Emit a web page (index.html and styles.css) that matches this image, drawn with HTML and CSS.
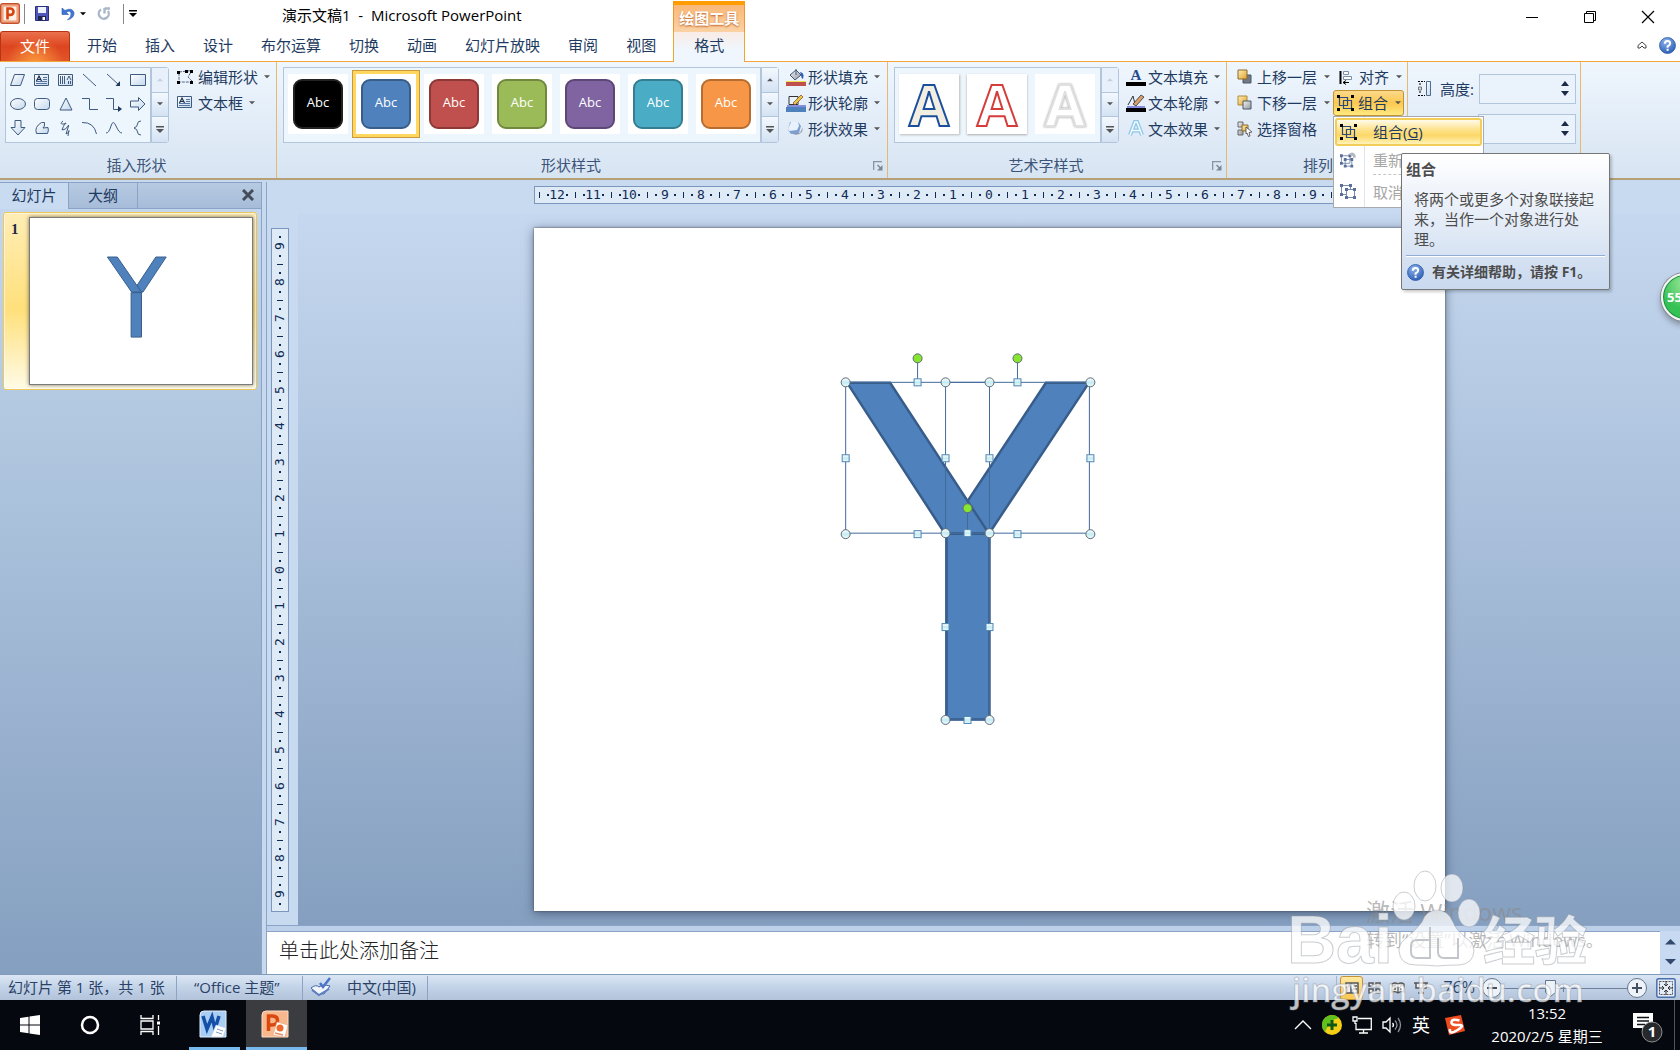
FILE: index.html
```html
<!DOCTYPE html>
<html lang="zh-CN">
<head>
<meta charset="utf-8">
<title>演示文稿1 - Microsoft PowerPoint</title>
<link rel="stylesheet" href="styles.css">
</head>
<body>
<svg class="defs" aria-hidden="true">
  <defs>
    <linearGradient id="sheet" x1="0" y1="0" x2="1" y2="1"><stop offset="0" stop-color="#fff"/><stop offset="1" stop-color="#c3d8ec"/></linearGradient>
    <linearGradient id="gold" x1="0" y1="0" x2="1" y2="1"><stop offset="0" stop-color="#fff0b8"/><stop offset="1" stop-color="#dfa02c"/></linearGradient>
    <linearGradient id="silver" x1="0" y1="0" x2="1" y2="1"><stop offset="0" stop-color="#f4f4f4"/><stop offset="1" stop-color="#8f979f"/></linearGradient>
    <radialGradient id="blueball" cx=".4" cy=".25" r=".8"><stop offset="0" stop-color="#8db4ea"/><stop offset="1" stop-color="#2a5cb4"/></radialGradient>
    <linearGradient id="knob" x1="0" y1="0" x2="0" y2="1"><stop offset="0" stop-color="#fff"/><stop offset=".5" stop-color="#c4ebf2"/><stop offset="1" stop-color="#effcff"/></linearGradient>
    <symbol id="i-down" viewBox="0 0 8 5"><path d="M0 0h8L4 4z" fill="currentColor"/></symbol>
    <symbol id="i-up" viewBox="0 0 8 5"><path d="M0 4h8L4 0z" fill="currentColor"/></symbol>
    <symbol id="i-more" viewBox="0 0 8 8"><path d="M0 0h8v1.5H0zM0 3h8L4 7z" fill="currentColor"/></symbol>
    <symbol id="i-launch" viewBox="0 0 10 10"><path d="M.5 9V.5H9" fill="none" stroke="#8a94a0" stroke-width="1.6"/><path d="M9.5 4v5.500H4L6.500 7 4 4.500 5 3.500l2.500 2.500z" fill="#7d8794"/></symbol>
    <symbol id="i-help" viewBox="0 0 16 16"><circle cx="8" cy="8" r="7.500" fill="url(#blueball)" stroke="#2f5ea8" stroke-width=".8"/><path d="M5.500 6.300Q5.500 3.800 8 3.800t2.500 2.200Q10.500 7.400 8.100 8.800V10M8.100 11v2" fill="none" stroke="#fff" stroke-width="1.900"/></symbol>
    <symbol id="i-group" viewBox="0 0 17 16"><path d="M2.500 2.500h8v8h-8zM6.500 5.500h8v8h-8z" fill="none" stroke="#2c4a7a" stroke-width="1.200"/><path d="M0 0h3v3H0zM14 0h3v3h-3zM0 13h3v3H0zM14 13h3v3h-3z" fill="#000"/></symbol>
    <symbol id="i-regroup" viewBox="0 0 18 18"><path d="M1.500 4.500h9v8h-9zM5.500 8.500h7v7h-7z" fill="none" stroke="#7a8fb0"/><path d="M0 3h3v3H0zM9 3h3v3H9zM0 11h3v3H0zM4 7h3v3H4zM11 7h3v3h-3zM4 14h3v3H4zM11 14h3v3h-3z" fill="#5a6f99"/><path d="M9 3q4-4 7 0l1 3-3 1q0-3-3-3z" fill="#b5b9bf"/></symbol>
    <symbol id="i-ungroup" viewBox="0 0 17 16"><path d="M1.500 1.500h9v9h-9z" fill="none" stroke="#7a8fb0"/><path d="M6.500 5.500h8v8h-8z" fill="#fff" stroke="#7a8fb0"/><path d="M0 0h3v3H0zM9 0h3v3H9zM0 9h3v3H0zM5 4h3v3H5zM13 4h3v3h-3zM5 12h3v3H5zM13 12h3v3h-3z" fill="#5a6f99"/></symbol>
    <symbol id="i-textbox" viewBox="0 0 16 14"><path d="M.5 1.500h14v11H.5z" fill="url(#sheet)" stroke="#3f5b7d"/><path d="M2.500 8 5 3l2.500 5M3.500 6.500h3" fill="none" stroke="#1d2f4d" stroke-width="1.200"/><path d="M9 4.500h4M9 6.500h4M2 8.500h11M2 10.500h11" stroke="#5675a0"/></symbol>
  </defs>
</svg>

<header class="titlebar">
  <div class="quick">
    <svg width="20" height="21" viewBox="0 0 20 21"><rect x=".7" y=".7" width="18.600" height="19.600" rx="2" fill="#f6b392" stroke="#c5502a" stroke-width="1.400"/><rect x="3" y="3" width="14" height="15" fill="#fff1e8" stroke="#e9936c"/><path d="M7.500 16.500V5.500h2.800a3.200 3.200 0 0 1 0 6.400H7.500" fill="none" stroke="#d8420e" stroke-width="2.600"/></svg>
    <i class="bar"></i>
    <svg class="save" width="14" height="15" viewBox="0 0 14 15"><path d="M.5.5h13v14H.5z" fill="#4f56b8" stroke="#2c2f80"/><path d="M3 1h8v6H3z" fill="#eef2fb"/><path d="M3 10h8v4.500H3z" fill="#1f2350"/><path d="M7.500 11h2.500v3H7.500z" fill="#fff"/></svg>
    <svg class="undo" width="14" height="14" viewBox="0 0 14 14"><path d="M1 1v6.500h6.500L5.300 5.400Q9 2.800 10 6t-3.500 7Q13.500 11 13 5.500 11 0 4 3.500z" fill="#3c76d6" stroke="#2b57ad" stroke-width=".6"/></svg>
    <svg class="arr" width="6" height="4"><use href="#i-down"/></svg>
    <svg class="redo" width="14" height="14" viewBox="0 0 14 14"><path d="M4 2.500A5 5 0 1 0 11 4M7.500 1v5.500M7.500 1.500H13" fill="none" stroke="#a9b7c9" stroke-width="2.400"/></svg>
    <i class="bar"></i>
    <svg class="arr" width="8" height="8"><use href="#i-more"/></svg>
  </div>
  <h1>演示文稿1&nbsp; -&nbsp; Microsoft PowerPoint</h1>
  <div class="wincontrols">
    <button aria-label="最小化"><svg width="14" height="14"><path d="M1 7.500h12" stroke="#000"/></svg></button>
    <button aria-label="还原"><svg width="14" height="14" fill="none" stroke="#000"><path d="M1.500 3.500h9v9h-9zM3.500 3V1.500h9v9H11"/></svg></button>
    <button aria-label="关闭"><svg width="14" height="14"><path d="M1 1l12 12M13 1 1 13" stroke="#000" stroke-width="1.200"/></svg></button>
  </div>
</header>

<nav class="tabs">
  <button class="file">文件</button>
  <button>开始</button><button>插入</button><button>设计</button><button>布尔运算</button><button>切换</button><button>动画</button><button>幻灯片放映</button><button>审阅</button><button>视图</button>
  <div class="context"><span class="context-title">绘图工具</span><button>格式</button></div>
  <div class="tabs-end">
    <svg width="10" height="8" viewBox="0 0 10 8"><path d="M1 4.500 5 1l4 3.500V7H7L5 5 3 7H1z" fill="#fff" stroke="#444"/></svg>
    <svg width="17" height="17"><use href="#i-help"/></svg>
  </div>
</nav>

<section class="ribbon">
  <div class="group g-insert">
    <div class="content">
      <div class="gallery">
        <div class="shapes">
          <svg viewBox="0 0 16 16"><path d="M4.500 2.500h10l-4 11h-10z"/></svg>
          <svg viewBox="0 0 16 16"><use href="#i-textbox" y="1" width="16" height="14"/></svg>
          <svg viewBox="0 0 16 16"><path d="M.5 2.500h14v11H.5z"/><path d="M2.500 4v8M4.500 4v8M6.500 4v8M10.500 9v3M12.500 9v3M9 8l2-4 2 4"/></svg>
          <svg viewBox="0 0 16 16"><path d="m1 2 13 12"/></svg>
          <svg viewBox="0 0 16 16"><path d="m1 2 12 11"/><path class="solid" d="M14 14H9.500L14 9z"/></svg>
          <svg viewBox="0 0 16 16"><path d="M.5 2.500h15v11H.5z"/></svg>
          <svg viewBox="0 0 16 16"><ellipse cx="8" cy="8" rx="7.500" ry="5.500"/></svg>
          <svg viewBox="0 0 16 16"><rect x=".5" y="2.500" width="15" height="11" rx="3"/></svg>
          <svg viewBox="0 0 16 16"><path d="m8 2 6 12H2z"/></svg>
          <svg viewBox="0 0 16 16"><path fill="none" d="M0 2.500h7.500v11H16"/></svg>
          <svg viewBox="0 0 16 16"><path fill="none" d="M0 2.500h7.500v11H15"/><path class="solid" d="M12 10v6l4-3z"/></svg>
          <svg viewBox="0 0 16 16"><path d="M.5 5h8V1.500L15 8l-6.500 6.500V11h-8z"/></svg>
          <svg viewBox="0 0 16 16"><path d="M5 .5h6v7h4L8 15 1 7.500h4z"/></svg>
          <svg viewBox="0 0 16 16"><path d="M2.500 13.500Q0 7 7.500 2.500h3Q11 7 9 8l5-.5q1 3-.5 6z"/></svg>
          <svg viewBox="0 0 16 16"><path fill="none" d="M5 1q-4 3 0 3t3-1-4 7q4 0 6-4t-2 8q3-1 3-3t-1 5"/></svg>
          <svg viewBox="0 0 16 16"><path fill="none" d="M0 2.500Q12 2 14.500 14"/></svg>
          <svg viewBox="0 0 16 16"><path fill="none" d="M0 13Q3 13 5 6t5 0 6 7"/></svg>
          <svg viewBox="0 0 16 16"><path fill="none" d="M11 1Q7.500 1 7.500 4T4 8q3.500 1 3.500 4t3.500 3"/></svg>
        </div>
        <div class="scroller"><button disabled aria-label="上一行"><svg width="6" height="4"><use href="#i-up"/></svg></button><button aria-label="下一行"><svg width="6" height="4"><use href="#i-down"/></svg></button><button aria-label="其他"><svg width="8" height="8"><use href="#i-more"/></svg></button></div>
      </div>
      <div class="commands">
        <button><svg width="20" height="16" viewBox="0 0 20 16"><path d="M3 3 16 1.500 12 8l5 5H3z" fill="none" stroke="#4c6488" stroke-dasharray="3 1"/><path d="M1 2h3v3H1zM9 1h3v3H9zM14 1h3v3h-3zM14 12h3v3h-3zM1 12h3v3H1z" fill="#000"/></svg>编辑形状<svg class="drop" width="6" height="4"><use href="#i-down"/></svg></button>
        <button><svg width="20" height="16"><use href="#i-textbox" x="1" width="16" height="14"/></svg>文本框<svg class="drop" width="6" height="4"><use href="#i-down"/></svg></button>
      </div>
    </div>
    <h2>插入形状</h2>
  </div>

  <div class="group g-style">
    <div class="content">
      <div class="gallery">
        <div class="styles">
          <button class="sw black"><span>Abc</span></button><button class="sw blue on"><span>Abc</span></button><button class="sw red"><span>Abc</span></button><button class="sw green"><span>Abc</span></button><button class="sw purple"><span>Abc</span></button><button class="sw teal"><span>Abc</span></button><button class="sw orange"><span>Abc</span></button>
        </div>
        <div class="scroller"><button aria-label="上一行"><svg width="6" height="4"><use href="#i-up"/></svg></button><button aria-label="下一行"><svg width="6" height="4"><use href="#i-down"/></svg></button><button aria-label="其他"><svg width="8" height="8"><use href="#i-more"/></svg></button></div>
      </div>
      <div class="commands">
        <button><svg width="20" height="18" viewBox="0 0 20 18"><path d="M0 14h20v4H0z" fill="#c0504d"/><path d="M0 13h20v1H0z" fill="#f2e04a"/><path d="m4 7 6-5 5 5-6 5z" fill="url(#silver)" stroke="#44597d"/><path d="M10 7V1" stroke="#44597d"/><path d="M14 4q5 1 3 7-2-1-2-4z" fill="#2a5cb4"/></svg>形状填充<svg class="drop" width="6" height="4"><use href="#i-down"/></svg></button>
        <button><svg width="20" height="18" viewBox="0 0 20 18"><path d="M0 13h20v5H0z" fill="#4f81bd"/><path d="M1 12h19" stroke="#2b2fc0"/><path d="M3 2.500h9v8H3z" fill="#eaf3fb" stroke="#333"/><path d="m7 9 8-8 2 2-8 8z" fill="#efc24a" stroke="#6b4b1d" stroke-width=".7"/></svg>形状轮廓<svg class="drop" width="6" height="4"><use href="#i-down"/></svg></button>
        <button><svg width="20" height="18" viewBox="0 0 20 18"><path d="M5 13q6 4 11-1l1-5-3 6z" fill="#8d98a8"/><path d="M4 2h8l3 4-2 7-8 1-3-4z" fill="#7f9fd2"/><path d="M5 2h7l1 4-2 4-8 1-1-2z" fill="#e8f1fc"/></svg>形状效果<svg class="drop" width="6" height="4"><use href="#i-down"/></svg></button>
      </div>
    </div>
    <h2>形状样式</h2><button class="launch" aria-label="设置形状格式"><svg width="10" height="10"><use href="#i-launch"/></svg></button>
  </div>

  <div class="group g-art">
    <div class="content">
      <div class="gallery">
        <div class="styles">
          <button class="art art-navy"><span>A</span></button>
          <button class="art art-red"><span>A</span></button>
          <button class="art art-white"><span>A</span></button>
        </div>
        <div class="scroller"><button disabled aria-label="上一行"><svg width="6" height="4"><use href="#i-up"/></svg></button><button aria-label="下一行"><svg width="6" height="4"><use href="#i-down"/></svg></button><button aria-label="其他"><svg width="8" height="8"><use href="#i-more"/></svg></button></div>
      </div>
      <div class="commands">
        <button><svg width="20" height="18" viewBox="0 0 20 18"><path d="M0 14h20v4H0z" fill="#000"/><text class="letter" x="10" y="12" text-anchor="middle">A</text></svg>文本填充<svg class="drop" width="6" height="4"><use href="#i-down"/></svg></button>
        <button><svg width="20" height="18" viewBox="0 0 20 18"><path d="M0 14h20v4H0z" fill="#000"/><path d="M1 13h18" stroke="#2b2fc0"/><path d="m2 11 5-9 2 8" fill="none" stroke="#333"/><path d="m7 10 8-9 3 2-8 9z" fill="#d9a06a" stroke="#333" stroke-width=".8"/></svg>文本轮廓<svg class="drop" width="6" height="4"><use href="#i-down"/></svg></button>
        <button><svg width="20" height="18" viewBox="0 0 20 18"><path d="m4 15 5-13h2l5 13M6.500 10.500h7" fill="none" stroke="#8cc6e8" stroke-width="4"/><path d="m4 15 5-13h2l5 13M6.500 10.500h7" fill="none" stroke="#f6fcff" stroke-width="1.500"/></svg>文本效果<svg class="drop" width="6" height="4"><use href="#i-down"/></svg></button>
      </div>
    </div>
    <h2>艺术字样式</h2><button class="launch" aria-label="设置文本效果格式"><svg width="10" height="10"><use href="#i-launch"/></svg></button>
  </div>

  <div class="group g-arrange">
    <div class="content">
      <div class="commands">
        <button><svg width="16" height="16" viewBox="0 0 16 16"><path d="M6 6h8v8H6z" fill="#6f7a86" stroke="#4f5965"/><path d="M1 1h9v9H1z" fill="url(#gold)" stroke="#8a6a2a"/></svg>上移一层<svg class="drop" width="6" height="4"><use href="#i-down"/></svg></button>
        <button><svg width="16" height="16" viewBox="0 0 16 16"><path d="M1 1h9v9H1z" fill="url(#gold)" stroke="#b08a3a"/><path d="M6 6h8v8H6z" fill="url(#silver)" stroke="#4f5965"/></svg>下移一层<svg class="drop" width="6" height="4"><use href="#i-down"/></svg></button>
        <button><svg width="16" height="16" viewBox="0 0 16 16"><path d="M1 1h5v5H1zM1 9h5v5H1z" fill="url(#silver)" stroke="#666"/><path d="M5 4h6v6H5z" fill="url(#gold)" stroke="#8a6a2a"/><path d="m9 6 6 5-3 .5L13 15l-1.500.5L10 12l-1 1z" fill="#fff" stroke="#444" stroke-width=".8"/></svg>选择窗格</button>
      </div>
      <div class="commands second">
        <button><svg width="16" height="16" viewBox="0 0 16 16"><path d="M1.500 2v13" stroke="#000" stroke-width="2"/><path d="M4.500 2.500h5v3h-5zM4.500 7.500h8v3h-8z" fill="#fff" stroke="#7d8fa8"/><path d="M4 13.500h6M7 11.500l-3 2 3 2" stroke="#000" fill="none"/></svg>对齐<svg class="drop" width="6" height="4"><use href="#i-down"/></svg></button>
        <div class="menu-anchor">
          <button class="pressed" aria-expanded="true"><svg width="17" height="16"><use href="#i-group"/></svg>组合<svg class="drop" width="6" height="4"><use href="#i-down"/></svg></button>
          <div class="menu" role="menu">
            <button role="menuitem" class="hot"><svg width="17" height="16"><use href="#i-group"/></svg><span>组合(<u>G</u>)</span></button>
            <button role="menuitem" disabled><svg width="17" height="18"><use href="#i-regroup"/></svg><span>重新组合</span></button>
            <hr>
            <button role="menuitem" disabled><svg width="17" height="16"><use href="#i-ungroup"/></svg><span>取消组合</span></button>
            <div class="tooltip" role="tooltip">
              <strong>组合</strong>
              <p>将两个或更多个对象联接起来，当作一个对象进行处理。</p>
              <div class="tip-help"><svg width="17" height="17"><use href="#i-help"/></svg><strong>有关详细帮助，请按 F1。</strong></div>
            </div>
          </div>
        </div>
      </div>
    </div>
    <h2>排列</h2>
  </div>

  <div class="group g-size">
    <div class="field"><svg width="16" height="18" viewBox="0 0 16 18"><path d="M9.500 1.500h4v14h-4z" fill="url(#sheet)" stroke="#4f6b8f"/><path d="M1 1.500h7M1 15.500h7M3 3v3M3 11v3" stroke="#000" stroke-dasharray="2 1"/><path d="M1.500 7h3v3h-3z" fill="#ddd" stroke="#777"/></svg><label for="height">高度:</label><div class="spin"><input id="height" type="text"><svg width="8" height="16" viewBox="0 0 8 16"><path d="M0 5h8L4 0zM0 10h8l-4 5z" fill="#1b2a45"/></svg></div></div>
    <div class="field"><div class="spin"><input aria-label="宽度" type="text"><svg width="8" height="16" viewBox="0 0 8 16"><path d="M0 5h8L4 0zM0 10h8l-4 5z" fill="#1b2a45"/></svg></div></div>
  </div>
</section>

<main class="work">
  <aside class="pane">
    <div class="pane-tabs"><button class="on">幻灯片</button><button>大纲</button><button class="close" aria-label="关闭"><svg width="12" height="12"><path d="m1 1 10 10M11 1 1 11" stroke="#444c58" stroke-width="3"/></svg></button></div>
    <div class="thumb"><b>1</b>
      <svg viewBox="0 0 223 168"><g fill="#4f81bd" stroke="#385d8a"><path d="M126.500 39.500H137L113.500 75H103z"/><path d="M77.500 39.500h10L112 75h-10z"/><path d="M101.500 75.500h10.500v45h-10.500z"/></g></svg>
    </div>
  </aside>
  <div class="editor">
    <div class="ruler-row"><div class="ruler across" data-max="12"></div></div>
    <div class="ruler-col"><div class="ruler down" data-max="9"></div></div>
    <div class="canvas">
      <div class="slide">
        <svg viewBox="534 228 911 684">
          <g fill="#4f81bd" stroke="#385d8a" stroke-width="2.500"><path d="M1046 383h43L989 534h-43z"/><path d="M847 383h43l99 151h-44z"/><path d="M946.500 534h43v186h-43z"/></g>
          <path d="M845.500 382.500h144v151h-144zM945.500 382.500h144v151h-144zM945.500 533.500h44v187h-44zM917.500 358v25M1017.500 358v25M967.500 508v25" fill="none" stroke="#41699b"/>
          <g id="handles" stroke="#5d6a76" fill="url(#knob)"></g>
        </svg>
      </div>
    </div>
    <div class="notes"><p>单击此处添加备注</p><div class="notes-scroll"><svg width="11" height="7" viewBox="0 0 8 5"><use href="#i-up"/></svg><svg width="11" height="7" viewBox="0 0 8 5"><use href="#i-down"/></svg></div></div>
  </div>
</main>

<footer class="status">
  <span class="s-slide">幻灯片 第 1 张，共 1 张</span><span class="s-theme">“Office 主题”</span>
  <span class="s-lang"><svg width="22" height="20" viewBox="0 0 22 20"><path d="M1 11q5-4 8-1 4-3 11-1l-6 8q-3-1-5 1Z" fill="#f1f4fa" stroke="#4766a5"/><path d="M2 13l7 5 10-6" fill="none" stroke="#5d7fc2" stroke-width="2"/><path d="m10 6 3 4 7-9" fill="none" stroke="#4b74c9" stroke-width="2.500"/></svg>中文(中国)</span>
  <div class="views">
    <button class="on" aria-label="普通视图"><svg width="14" height="12"><path d="M1 1h12v10H1zM6 1v10M8 4h4M8 7h4" fill="#eee" stroke="#555" stroke-width="1.500"/></svg></button>
    <button aria-label="幻灯片浏览"><svg width="14" height="12" fill="#eee" stroke="#555" stroke-width="1.500"><path d="M1 1h4v3H1zM8 1h4v3H8zM1 7h4v4H1zM8 7h4v4H8z"/></svg></button>
    <button aria-label="阅读视图"><svg width="14" height="12" fill="#eee" stroke="#555" stroke-width="1.300"><path d="M1 2q3-2 6 0 3-2 6 0v8q-3-1-6 1-3-2-6-1zM7 2v9M3 4h2M3 7h2M9 4h2M9 7h2"/></svg></button>
    <button aria-label="幻灯片放映"><svg width="14" height="12" fill="#eee" stroke="#555" stroke-width="1.500"><path d="M0 1h14M2 1v5h10V1M7 6v4M4 11h6"/></svg></button>
  </div>
  <span class="percent">76%</span>
  <svg class="zoom" width="166" height="24" viewBox="0 0 166 24"><path d="M20 12.500h136M82.500 8v8" stroke="#6d7f9a"/><g fill="#eef3fa" stroke="#66758c"><circle cx="11" cy="12" r="9.500"/><circle cx="156" cy="12" r="9.500"/><path d="M64.500 4.500h10v12l-5 4-5-4z"/></g><path d="M6 12h10M151 12h10M156 7v10" stroke="#444f60" stroke-width="2"/></svg>
  <svg class="fit" width="20" height="20" viewBox="0 0 20 20"><rect x=".8" y=".8" width="18.400" height="18.400" rx="2" fill="#e3ecf7" stroke="#4a6fae" stroke-width="1.500"/><path d="M3.500 3.500h13v13h-13z" fill="none" stroke="#555" stroke-dasharray="2 1"/><path d="M10 3v5M8 6l2 2 2-2M10 17v-5M8 14l2-2 2 2M3 10h5M6 8l2 2-2 2M17 10h-5M14 8l-2 2 2 2" fill="none" stroke="#333"/></svg>
</footer>

<div class="taskbar">
  <button class="tk" aria-label="开始"><svg width="20" height="20" viewBox="0 0 20 20" fill="#fff"><path d="M0 3l8.500-1.200v7.700H0zM9.500 1.600 20 0v9.500H9.500zM0 10.500h8.500v7.700L0 17zM9.500 10.500H20V20L9.500 18.400z"/></svg></button>
  <button class="tk" aria-label="Cortana"><svg width="20" height="20"><circle cx="10" cy="10" r="8" fill="none" stroke="#fff" stroke-width="2.500"/></svg></button>
  <button class="tk" aria-label="任务视图"><svg width="20" height="20" fill="none" stroke="#fff" stroke-width="1.300"><path d="M1 0v3.500h12V0M1 20v-3.500h12V20M1 6h12v8H1zM18.500 0v5M18.500 11v9"/><path d="M17 6.500h3v3h-3z" fill="#fff" stroke="none"/></svg></button>
  <button class="app word" aria-label="Word"><svg width="28" height="28" viewBox="0 0 28 28"><path d="M1 5q0-4 4-4h22v26H1z" fill="#a9cdf3" stroke="#e4effb"/><path d="m4 6 4 13 5-12 3 12 4-13" fill="none" stroke="#1450a8" stroke-width="3.500"/><path d="m17 15 10 3-3 9H12z" fill="#fff" stroke="#b9cfe8" stroke-width=".6"/><path d="m18 19 6 2M17 22l6 2" stroke="#7d9cc8"/></svg></button>
  <button class="app on" aria-label="PowerPoint"><svg width="28" height="28" viewBox="0 0 28 28"><path d="M1 5q0-4 4-4h22v26H1z" fill="#f8b88e" stroke="#fbdcc8"/><path d="M7.500 21V6H11q5.500 0 5.500 4.500T11 15H8" fill="none" stroke="#d9480f" stroke-width="3.500"/><path d="m16 12 11 3-3 12-12-2z" fill="#fff" stroke="#e9a47e" stroke-width=".6"/><circle cx="19" cy="18" r="3.500" fill="#ee6a2c"/><path d="m14 23 8 2" stroke="#e59063" stroke-width="1.500"/></svg></button>
  <div class="tray">
    <svg width="18" height="10"><path d="m1 9 8-8 8 8" fill="none" stroke="#fff" stroke-width="1.400"/></svg>
    <svg width="20" height="20"><circle cx="10" cy="10" r="10" fill="#f5cf16"/><path d="M0 10a10 10 0 0 1 17-7Q8 4 3 17 0 14 0 10" fill="#5fc01e"/><path d="M10 5v10M5 10h10" stroke="#0c5a14" stroke-width="3"/></svg>
    <svg width="20" height="18" fill="none" stroke="#fff" stroke-width="1.300"><path d="M6 2.500h13.300v11H4V7M1 1h4v4H1zM3 5v3M11.500 13v4M7 17h9"/></svg>
    <svg width="20" height="18" fill="none" stroke="#fff" stroke-width="1.300"><path d="M1 6h3l4-4v14l-4-4H1zM10.500 7q2 2 0 4"/><path d="M13 4.500q4 4.500 0 9M16 2q5 7 0 14" stroke="#8b8f96"/></svg>
    <span class="ime">英</span>
    <svg class="sogou" width="20" height="20"><path d="m0 3 16-3 4 16-16 4z" fill="#ee4b1e"/><path d="M14.500 5.500Q7 3.500 6.500 7t7 3-1 5-7.500-1" fill="none" stroke="#fff" stroke-width="2.600"/></svg>
    <div class="clock"><span>13:52</span><span>2020/2/5 星期三</span></div>
    <svg class="notice" width="32" height="32" viewBox="0 0 32 32"><path d="M1 1h20v15h-7l-4 4v-4H1z" fill="#fff"/><path d="M5 5.500h12M5 9h12M5 12.500h8" stroke="#10131a" stroke-width="1.500"/><circle cx="20" cy="20" r="10" fill="#26282c" stroke="#8d8d8d"/><text x="20" y="25" text-anchor="middle">1</text></svg>
    <i class="peek"></i>
  </div>
</div>

<div class="ball">55</div>

<div class="activate"><span>激活 Windows</span><small>转到“设置”以激活 Windows。</small></div>
<svg class="watermark" width="320" height="160" viewBox="0 0 320 160" aria-hidden="true">
  <g fill="#fff" fill-opacity=".75" stroke="#8a9098" stroke-opacity=".45">
    <ellipse cx="145" cy="26" rx="11" ry="15"/><ellipse cx="172" cy="28" rx="11" ry="14"/><ellipse cx="124" cy="46" rx="11" ry="14"/><ellipse cx="189" cy="53" rx="11" ry="14"/>
    <path d="M157 50Q146 50 142 62 136 70 124 80 119 84 119 91q1 14 17 14 11 0 21 1 10-1 22-1 14-1 15-14 0-8-8-13-10-8-13-16-5-12-16-12z"/>
    <path class="wm-du" d="M150 67v31h-13q-6 0-6-6v-6q0-6 6-6h13M158 78v14q0 6 6 6h14V78"/>
    <text class="wm-latin" x="7" y="103">Bai</text>
    <text class="wm-cjk" x="203" y="100">经验</text>
    <text class="wm-url" x="12" y="142">jingyan.baidu.com</text>
  </g>
</svg>
<script src="script.js"></script>
</body>
</html>
```
FILE: styles.css
```css
* { box-sizing: border-box; }
html, body { height: 100%; }
body {
  margin: 0;
  min-width: 1200px;
  display: flex;
  flex-direction: column;
  position: relative;
  overflow: hidden;
  font: 15px/20px "Open Sans", "Noto Sans CJK SC", sans-serif;
  color: #1e3a5f;
  background: #fff;
}
button { font: inherit; color: inherit; background: none; border: 0; padding: 0; margin: 0; }
h1, h2, p { margin: 0; font-size: 15px; font-weight: 400; }
svg { flex: none; display: block; }
.defs { position: absolute; width: 0; height: 0; }

/* title bar */
.titlebar { display: flex; height: 31px; align-items: center; background: #fff; color: #000; }
.quick { display: flex; align-items: center; width: 282px; height: 27px; padding-bottom: 4px; }
.quick .bar { width: 1px; height: 20px; margin-left: 4px; background: #888; }
.save { margin-left: 10px; }
.undo { margin-left: 12px; }
.quick .arr { margin-left: 5px; }
.redo { margin: 0 8px 0 11px; }
.titlebar h1 { flex: 1; padding-bottom: 2px; }
.wincontrols { display: flex; padding: 3px 3px 0 0; }
.wincontrols button { width: 58px; height: 28px; display: grid; place-items: center; }

/* ribbon tabs */
.tabs { display: flex; height: 31px; border-bottom: 1px solid #f3a73a; position: relative; }
.tabs button { padding: 0 14px 2px; height: 30px; }
.tabs .file { width: 70px; margin-right: 3px; color: #fff; background: radial-gradient(ellipse at 50% 110%, #fb9a3c, transparent 60%), linear-gradient(#e9714c, #dd4520 50%, #e2552a); border: 1px solid #b83512; border-bottom: 0; border-radius: 3px 3px 0 0; }
.context { position: relative; width: 72px; margin: 0 0 -1px 3px; border: solid #f0a52c; border-width: 1px 1px 0; background: linear-gradient(#f9ece6, #eff6fd 60%); }
.context button { width: 70px; height: 28px; }
.context-title { position: absolute; left: -1px; right: -1px; bottom: 30px; height: 31px; padding-top: 3px; border: solid #f0962c; border-width: 4px 1px 0; border-top-color: #ff9c00; background: linear-gradient(#f9b877, #fbd2a4); color: #fff; font-weight: 700; text-align: center; text-shadow: 0 1px 2px #c0602a; white-space: nowrap; }
.tabs-end { display: flex; gap: 12px; align-items: center; margin-left: auto; padding: 0 4px 2px 0; }

/* ribbon */
.ribbon { display: flex; height: 118px; background: linear-gradient(#eff6fd, #e4eef9 45%, #d7e4f2); border-bottom: 2px solid #b5a077; position: relative; z-index: 2; }
.group { position: relative; flex: none; display: flex; flex-direction: column; border-right: 1px solid #e6b96f; }
.g-insert { width: 277px; padding-left: 5px; }
.g-style { width: 611px; padding-left: 6px; }
.g-art { width: 339px; padding-left: 6px; }
.g-arrange { width: 181px; padding-left: 10px; }
.g-size { width: 173px; padding: 12px 4px 0 9px; gap: 10px; }
.content { display: flex; height: 88px; }
.group h2 { text-align: center; color: #3c5478; line-height: 20px; padding-top: 5px; }
.g-insert h2, .g-arrange h2 { padding-right: 8px; }
.g-style h2, .g-art h2 { padding-right: 28px; }
.launch { position: absolute; right: 4px; bottom: 7px; }
.gallery { display: flex; height: 76px; margin-top: 5px; }
.shapes { display: grid; grid-template-columns: repeat(6, 16px); align-content: start; gap: 8px; padding: 4px 4px 0; width: 146px; background: #edf5fd; border: 1px solid #b3c5db; }
.shapes svg { width: 16px; height: 16px; fill: url(#sheet); stroke: #3f5b80; }
.shapes .solid { fill: #1e3a5f; stroke: none; }
.scroller { display: grid; grid-template-rows: 1fr 1fr 1fr; width: 18px; border: 1px solid #b3c5db; border-radius: 0 3px 3px 0; color: #555; }
.scroller button { display: grid; place-items: center; background: linear-gradient(#f3f8fe, #d3e2f3); border-bottom: 1px solid #b3c5db; }
.scroller button:last-child { border: 0; }
.scroller button:disabled { color: #c3d0df; background: #e8f1fb; }
.commands { padding: 2px 0 0 7px; }
.commands button { display: flex; align-items: center; height: 26px; gap: 2px; white-space: nowrap; }
.drop { margin-left: 4px; color: #555; }
.styles { display: flex; gap: 8px; padding: 6px 4px; background: #edf5fd; border: 1px solid #b3c5db; }
.g-style .gallery { width: 496px; }
.g-style .styles { width: 478px; }
.g-art .styles { width: 207px; }
.sw { width: 60px; height: 60px; background: #fff; display: grid; place-items: center; color: #fff; font-size: 13px; flex: none; }
.sw.on { outline: 3px solid #ffd75e; box-shadow: 0 0 0 4px #c99a3b; }
.sw span { width: 50px; height: 50px; line-height: 42px; border: 2px solid; border-radius: 9px; }
.sw span { background: var(--fill); border-color: var(--edge); }
.black { --fill: #000; --edge: #222; }
.blue { --fill: #4f81bd; --edge: #385d8a; }
.red { --fill: #c0504d; --edge: #8c3836; }
.green { --fill: #9bbb59; --edge: #71893f; }
.purple { --fill: #8064a2; --edge: #5c4776; }
.teal { --fill: #4bacc6; --edge: #357d91; }
.orange { --fill: #f79646; --edge: #b66d31; }
.commands .art, .art { background: #fff; width: 60px; height: 60px; font: 700 58px/60px "Open Sans", sans-serif; }
.art span { display: block; -webkit-text-stroke: 2px var(--line); }
.art-navy { color: #f3eee2; --line: #1a4f9c; filter: drop-shadow(1px 1px 1px #bbb); }
.art-red { color: #fff; --line: #d53c3a; filter: drop-shadow(0 1px 1px #aaa); }
.art-white { color: #fff; --line: #e0e0e0; }
.art-white span { filter: drop-shadow(0 0 1px #999); }
.letter { font: 700 15px "Liberation Serif", serif; fill: #274b8f; }
.g-arrange .commands { padding-left: 0; }
.g-arrange .commands button { gap: 4px; }
.g-arrange .drop { margin-left: 3px; }
.g-arrange .second { padding-left: 3px; }
.second > button { padding-left: 6px; }
.menu-anchor { position: relative; }
.commands .pressed { width: 71px; padding-left: 3px; background: linear-gradient(#fbd98b, #fcc850 50%, #ffea80); border: 1px solid #c29233; border-radius: 3px; }
.menu { position: absolute; left: 0; top: 26px; width: 151px; height: 92px; padding: 1px; background: linear-gradient(#e0e4ea, #e0e4ea) 30px 0 / 1px 100% no-repeat, #fff; border: 1px solid #a7abb0; z-index: 3; }
.g-arrange .menu button { display: flex; width: 147px; height: 28px; padding-left: 5px; gap: 16px; }
.menu button:disabled { color: #a6a6a6; }
.g-arrange .menu .hot { background: linear-gradient(#fffbe9, #fde083 45%, #fbd869 65%, #fff3b8); border: 2px solid #f2cd58; border-radius: 3px; padding-left: 3px; }
.menu hr { margin: 0 4px 3px 38px; border: 0; border-top: 1px dashed #c5c5c5; }
.tooltip { position: absolute; left: 67px; top: 36px; width: 209px; height: 137px; padding: 5px 4px; color: #4c4c4c; background: linear-gradient(#fff, #c9d9ef); border: 1px solid #767676; border-radius: 2px; box-shadow: 2px 2px 3px #0003; white-space: normal; }
.tooltip p { padding: 10px 3px 6px 8px; line-height: 20px; }
.tip-help { display: flex; align-items: center; gap: 8px; padding: 6px 0 0 1px; border-top: 1px solid #93aed6; box-shadow: inset 0 1px #fff; white-space: nowrap; }
.tip-help strong { font-size: 14px; }
.field { display: flex; align-items: center; justify-content: flex-end; height: 30px; }
.field label { width: 39px; margin-left: 7px; white-space: nowrap; }
.spin { position: relative; width: 98px; height: 30px; }
.spin input { width: 100%; height: 30px; background: #eaf2fb; border: 1px solid #b3c5db; padding: 0 20px 0 4px; font: inherit; }
.spin svg { position: absolute; right: 7px; top: 7px; }

/* work area */
.work { flex: 1; min-height: 0; display: flex; padding-top: 2px; background: #c7d9ef; }
.pane { width: 262px; flex: none; background: linear-gradient(#c5d8ef, #b2c8e1 30%, #859fc0); border-right: 1px solid #8aa3c6; }
.pane-tabs { display: flex; height: 27px; border-top: 1px solid #8aa3c6; }
.pane-tabs button { width: 69px; padding-bottom: 2px; background: linear-gradient(#b7cae2, #a6bcd8); border: solid #8aa3c6; border-width: 0 1px 1px 0; }
.pane-tabs .on { background: #c9dbf1; border-bottom: 0; }
.pane-tabs .close { flex: 1; display: flex; justify-content: flex-end; align-items: center; padding-right: 7px; border-right: 0; }
.thumb { display: flex; margin: 3px 4px 0 3px; height: 178px; padding: 4px 3px 0 7px; gap: 10px; border: 1px solid #f0c95a; border-radius: 3px; background: linear-gradient(#ffedb5, #ffe07c 55%, #fffbe6); box-shadow: inset 0 0 0 1px #fff8; }
.thumb b { font: 700 15px/24px "Liberation Serif", serif; color: #1b2c49; }
.thumb svg { width: 224px; height: 168px; background: #fff; border: 1px solid #7b7b7b; box-shadow: 0 0 4px #0008; }
.editor { flex: 1; min-width: 0; margin-left: 4px; border-left: 1px solid #8aa3c6; display: grid; grid-template: 31px minmax(0, 1fr) auto / 31px minmax(0, 1fr); background: #c8daef; }
.ruler-row { grid-column: 2; padding-top: 4px; }
.ruler-col { grid-column: 1; grid-row: 2; display: flex; align-items: center; padding-left: 4px; }
.ruler { display: flex; justify-content: center; overflow: hidden; background: #dfeaf7; border: 1px solid #7b97bd; font: 13px/16px "DejaVu Sans Mono", monospace; color: #0d2b55; --c: linear-gradient(#0d2b55, #0d2b55); }
.across { width: 911px; max-width: 92%; height: 18px; margin: 0 auto; }
.down { flex-direction: column; width: 18px; height: 684px; max-height: 100%; }
.ruler span { flex: none; width: 36px; height: 16px; text-align: center; background: var(--c) 0 50% / 1px 6px no-repeat, var(--c) 8px 50% / 2px 2px no-repeat, var(--c) 27px 50% / 2px 2px no-repeat; }
.down span { width: 16px; height: 36px; line-height: 36px; background: var(--c) 50% 0 / 6px 1px no-repeat, var(--c) 50% 8px / 2px 2px no-repeat, var(--c) 50% 27px / 2px 2px no-repeat; }
.ruler i { font-style: normal; }
.down i { display: block; transform: rotate(-90deg); }
.canvas { grid-column: 2; grid-row: 2; display: grid; place-items: center; overflow: hidden; background: linear-gradient(#c6d8ef, #b2c7e1 30%, #859fc0); }
.slide { width: 911px; max-width: 92%; aspect-ratio: 4 / 3; background: #fff; box-shadow: 0 2px 10px #24344f99, 0 0 2px #555; }
.slide svg { width: 100%; height: 100%; }
.notes { grid-column: 1 / 3; display: flex; height: 48px; border-top: 5px solid #bdd0ea; box-shadow: inset 0 1px #8aa3c6; outline: 1px solid #8aa3c6; background: #fff; color: #222; }
.notes p { flex: 1; padding: 7px 12px; font: 300 20px/24px "Noto Sans CJK SC", sans-serif; }
.notes-scroll { width: 20px; background: #c8daf1; color: #33496f; display: flex; flex-direction: column; align-items: center; justify-content: space-around; padding: 2px 0; }

/* status bar */
.status { display: flex; align-items: center; height: 26px; padding: 0 4px 0 8px; border-top: 1px solid #7f9abb; background: linear-gradient(#dbe6f4, #c2d3e8 50%, #b2c3da); color: #2b4166; white-space: nowrap; }
.status > span { border-right: 1px solid #8da3c1; height: 24px; line-height: 22px; }
.status .s-slide { width: 169px; }
.status .s-theme { width: 126px; padding-left: 17px; }
.status .s-lang { width: 125px; display: flex; gap: 15px; align-items: center; padding: 0 0 2px 7px; }
.views { display: flex; margin-left: auto; padding-left: 3px; border-left: 1px solid #a6b7cf; }
.views button { width: 23px; height: 24px; display: grid; place-items: center; }
.views .on { background: linear-gradient(#ffe9a2, #fcc850); border: 1px solid #c29233; border-radius: 3px; }
.status .percent { border: 0; width: 40px; margin-left: 3px; text-align: right; font-size: 16px; }
.zoom { margin-left: 6px; }
.fit { margin-left: 9px; }

/* taskbar */
.taskbar { display: flex; height: 50px; background: #05080e; color: #fff; padding-left: 2px; }
.tk { width: 56px; margin-right: 4px; display: grid; place-items: center; }
.app { width: 61px; display: grid; justify-items: center; align-items: start; padding-top: 10px; border-bottom: 3px solid #76b9ed; }
.app.word { width: 51px; margin: 0 6px 0 7px; padding-right: 4px; }
.app.on { background: #3a3c40; padding-right: 4px; }
.tray { display: flex; align-items: center; margin-left: auto; gap: 10px; }
.ime { font-size: 18px; }
.sogou { margin-left: 5px; }
.clock { display: flex; flex-direction: column; align-items: center; width: 116px; margin-left: 14px; line-height: 23px; white-space: nowrap; }
.notice { margin: 6px 0 0 17px; }
.notice text { font: 700 15px "Open Sans", sans-serif; fill: #fff; }
.peek { width: 1px; height: 50px; background: #555; margin: 0 5px 0 4px; }
.tray .notice + .peek { margin-left: 0; }

/* floating layers */
.ball { position: absolute; right: -29px; top: 273px; width: 48px; height: 48px; padding-left: 4px; border: 2px solid #f4f4f4; border-radius: 50%; background: radial-gradient(circle at 50% 20%, #9be79a, #35c153 60%); box-shadow: 0 0 0 1px #888, 0 4px 6px #0005, inset 0 0 0 1px #1f8d42; color: #fff; font: 700 13px/44px "Open Sans", sans-serif; clip-path: inset(-8px 29px -12px -8px); z-index: 4; }
.activate { position: absolute; right: 82px; bottom: 98px; width: 232px; color: #8a8a8a99; white-space: nowrap; z-index: 4; }
.activate span { display: block; font-size: 24px; line-height: 32px; }
.activate small { display: block; font-size: 18px; line-height: 24px; }
.watermark { position: absolute; right: 80px; bottom: 30px; z-index: 5; }
.wm-du { fill: none; stroke: #b4b9bf; stroke-opacity: .8; stroke-width: 2px; }
.wm-latin { font: 700 68px "Liberation Sans", sans-serif; }
.wm-cjk { font: 900 52px "Noto Sans CJK SC", sans-serif; }
.wm-url { font: 600 33px "Open Sans", sans-serif; }
```
FILE: script.js
```js
// Fill each ruler with its scale, counting down to zero and up again.
document.querySelectorAll('.ruler').forEach(function (ruler) {
  var max = Number(ruler.dataset.max);
  for (var n = -max; n <= max; n++) {
    var cell = document.createElement('span');
    var label = document.createElement('i');
    label.textContent = Math.abs(n);
    cell.appendChild(label);
    ruler.appendChild(cell);
  }
});

// Selection handles: round corners, square midpoints, green rotation grips.
var ns = 'http://www.w3.org/2000/svg';
var layer = document.getElementById('handles');
function add(tag, attrs) {
  var el = document.createElementNS(ns, tag);
  for (var key in attrs) el.setAttribute(key, attrs[key]);
  layer.appendChild(el);
}
[[845, 382], [945, 382], [989, 382], [1090, 382], [845, 534], [1090, 534], [945, 533], [989, 533], [945, 720], [989, 720]].forEach(function (p) {
  add('circle', { cx: p[0] + 0.5, cy: p[1] + 0.5, r: 4.5 });
});
[[917, 382], [1017, 382], [845, 458], [945, 458], [989, 458], [1090, 458], [917, 534], [1017, 534], [967, 533], [945, 627], [989, 627], [967, 720]].forEach(function (p) {
  add('rect', { x: p[0] - 3, y: p[1] - 3, width: 7, height: 7, stroke: '#4f86b4' });
});
[[917, 358], [1017, 358], [967, 508]].forEach(function (p) {
  add('circle', { cx: p[0] + 0.5, cy: p[1] + 0.5, r: 4.5, fill: '#86e52f' });
});
```
